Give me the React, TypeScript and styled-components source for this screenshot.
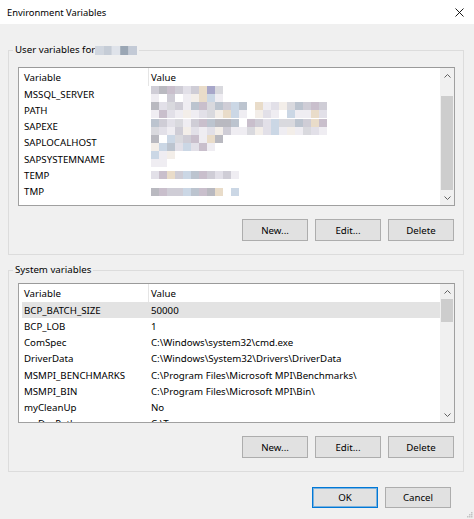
import styled, { createGlobalStyle } from "styled-components";

const GlobalStyle = createGlobalStyle`
  * { box-sizing: border-box; }
  body {
    margin: 0;
    background: #f0f0f0;
  }
`;

const palette: Record<string, string> = {
    a: "#b9b9c0",
    b: "#cfcdd6",
    c: "#e2e0e8",
    d: "#efedf2",
    e: "#a7a6c9",
    f: "#e9dcc9",
    g: "#cbd7e5",
    h: "#c9bfcc",
    i: "#d9d9de",
    j: "#f3eee9",
    k: "#bcc4cf",
};

const userVars = [
    { name: "MSSQL_SERVER", mosaic: ["bahbcbfei", "dwbwdjfgd"] },
    { name: "PATH", mosaic: ["acibdkhikbgkwfdcjikbhb", "dhcdjdcijfgdwjcdwgddfc"] },
    { name: "SAPEXE", mosaic: ["kbcidbhkaakwhbcgiikbfh", "icdbjcdcjbddijcgdjdicd"] },
    { name: "SAPLOCALHOST", mosaic: ["awgibhdfa", "jgkcgchdw"] },
    { name: "SAPSYSTEMNAME", mosaic: ["gdj", "ddw"] },
    { name: "TEMP", mosaic: ["chfbgkhbcbd"] },
    { name: "TMP", mosaic: ["ahbbgkhafwg"] },
];

const systemVars = [
    { name: "BCP_BATCH_SIZE", value: "50000" },
    { name: "BCP_LOB", value: "1" },
    { name: "ComSpec", value: "C:\\Windows\\system32\\cmd.exe" },
    { name: "DriverData", value: "C:\\Windows\\System32\\Drivers\\DriverData" },
    { name: "MSMPI_BENCHMARKS", value: "C:\\Program Files\\Microsoft MPI\\Benchmarks\\" },
    { name: "MSMPI_BIN", value: "C:\\Program Files\\Microsoft MPI\\Bin\\" },
    { name: "myCleanUp", value: "No" },
    { name: "myDevPath", value: "C:\\Temp" },
];

const Dialog = styled.div`
    width: 474px;
    height: 519px;
    position: relative;
    display: flex;
    flex-direction: column;
    background: #f0f0f0;
    font-family: "Noto Sans", "Open Sans", sans-serif;
    font-size: 9.7px;
    color: #000;
    overflow: hidden;
`;

const TitleBar = styled.div`
    height: 24px;
    flex: none;
    display: flex;
    align-items: center;
    justify-content: space-between;
    padding: 0 10px 0 7px;
    background: #fff;
    font-size: 9.4px;
`;

const Body = styled.div`
    flex: 1;
    display: flex;
    flex-direction: column;
    padding: 18px 10px 0 8px;
`;

const Group = styled.fieldset<{ $top: number; $gap?: number }>`
    margin: ${(p) => p.$gap ?? 0}px 0 0;
    min-width: 0;
    border: 1px solid #dcdcdc;
    padding: ${(p) => p.$top}px 8px 13px 9px;
    display: flex;
    flex-direction: column;
`;

const Legend = styled.legend`
    margin-left: -5px;
    padding: 0 2px;
    height: 16px;
    line-height: 16px;
    display: flex;
    align-items: center;
`;

const ListView = styled.div<{ $height: number }>`
    height: ${(p) => p.$height}px;
    flex: none;
    display: flex;
    background: #fff;
    border: 1px solid #a0a0a0;
    border-top-color: #9a9a9a;
`;

const Rows = styled.div`
    flex: 1;
    min-width: 0;
    overflow: hidden;
    padding-left: 3px;
`;

const Row = styled.div<{ $selected?: boolean; $header?: boolean }>`
    height: ${(p) => (p.$header ? 18 : 16.25)}px;
    display: grid;
    grid-template-columns: 127px 1fr;
    align-items: center;
    background: ${(p) => (p.$selected ? "#e3e3e3" : "transparent")};
    white-space: nowrap;
`;

const NameCell = styled.div<{ $header?: boolean }>`
    height: 100%;
    display: flex;
    align-items: center;
    padding-left: 2px;
    border-right: 1px solid ${(p) => (p.$header ? "#e5e5e5" : "transparent")};
`;

const ValueCell = styled.div`
    height: 100%;
    display: flex;
    align-items: center;
    padding-left: 2px;
`;

const ScrollBar = styled.div`
    width: 14px;
    flex: none;
    display: flex;
    flex-direction: column;
    background: #f0f0f0;
`;

const Arrow = styled.div`
    height: 15px;
    flex: none;
    display: flex;
    align-items: center;
    justify-content: center;
    color: #606060;
`;

const Track = styled.div`
    flex: 1;
`;

const Thumb = styled.div<{ $offset: number; $size: number }>`
    margin: ${(p) => p.$offset}px 1px 0;
    height: ${(p) => p.$size}px;
    background: #cdcdcd;
`;

const ButtonRow = styled.div<{ $gap: number; $pad?: number }>`
    margin-top: ${(p) => p.$gap}px;
    display: flex;
    justify-content: flex-end;
    gap: 7px;
    padding-right: ${(p) => p.$pad ?? 1}px;
`;

const Button = styled.button<{ $default?: boolean; $height?: number }>`
    width: 66px;
    height: ${(p) => p.$height ?? 22}px;
    margin: 0;
    padding: 0;
    font: inherit;
    color: #000;
    background: #e1e1e1;
    border: 1px solid ${(p) => (p.$default ? "#0078d7" : "#adadad")};
    box-shadow: ${(p) => (p.$default ? "inset 0 0 0 1px rgba(0, 120, 215, 0.45)" : "none")};
`;

const Grip = styled.svg`
    position: absolute;
    right: 1px;
    bottom: 1px;
`;

const Mosaic = ({ rows, cell = 8, h = 8 }: { rows: string[]; cell?: number; h?: number }) => {
    const cols = Math.max(...rows.map((r) => r.length));
    return (
        <svg width={cols * cell} height={rows.length * h} style={{ display: "block" }}>
            {rows.map((r, y) =>
                r.split("").map((c, x) =>
                    palette[c] ? (
                        <rect key={`${x}-${y}`} x={x * cell} y={y * h} width={cell} height={h} fill={palette[c]} />
                    ) : null,
                ),
            )}
        </svg>
    );
};

const UserBadge = () => {
    const colors = ["#d0d6df", "#c5ccd6", "#dfe3ea", "#9aa6b4", "#c3cad6"];
    return (
        <svg width={42} height={9} style={{ display: "block" }}>
            {colors.map((c, i) => (
                <rect key={i} x={i * 8.4} y={0} width={8.4} height={9} fill={c} />
            ))}
        </svg>
    );
};

const Chevron = ({ up }: { up?: boolean }) => (
    <svg width="7" height="4" viewBox="0 0 7 4">
        <path d={up ? "M0.5 3.5 L3.5 0.5 L6.5 3.5" : "M0.5 0.5 L3.5 3.5 L6.5 0.5"} fill="none" stroke="currentColor" strokeWidth="1" />
    </svg>
);

const Scroller = ({ offset, size }: { offset: number; size: number }) => (
    <ScrollBar>
        <Arrow>
            <Chevron up />
        </Arrow>
        <Track>
            <Thumb $offset={offset} $size={size} />
        </Track>
        <Arrow>
            <Chevron />
        </Arrow>
    </ScrollBar>
);

const Header = () => (
    <Row $header>
        <NameCell $header>Variable</NameCell>
        <ValueCell>Value</ValueCell>
    </Row>
);

const App = () => {
    return (
        <Dialog>
            <GlobalStyle />
            <TitleBar>
                <span>Environment Variables</span>
                <svg width="9" height="9" viewBox="0 0 9 9">
                    <path d="M0.5 0.5 L8.5 8.5 M8.5 0.5 L0.5 8.5" stroke="#000" strokeWidth="0.9" />
                </svg>
            </TitleBar>
            <Body>
                <Group $top={9}>
                    <Legend>
                        User variables for
                        <UserBadge />
                    </Legend>
                    <ListView $height={139}>
                        <Rows>
                            <Header />
                            {userVars.map((v) => (
                                <Row key={v.name}>
                                    <NameCell>{v.name}</NameCell>
                                    <ValueCell>
                                        <Mosaic rows={v.mosaic} />
                                    </ValueCell>
                                </Row>
                            ))}
                        </Rows>
                        <Scroller offset={13} size={94} />
                    </ListView>
                    <ButtonRow $gap={13}>
                        <Button>New...</Button>
                        <Button>Edit...</Button>
                        <Button>Delete</Button>
                    </ButtonRow>
                </Group>
                <Group $top={5} $gap={7}>
                    <Legend>System variables</Legend>
                    <ListView $height={140}>
                        <Rows>
                            <Header />
                            {systemVars.map((v, i) => (
                                <Row key={v.name} $selected={i === 0}>
                                    <NameCell>{v.name}</NameCell>
                                    <ValueCell>{v.value}</ValueCell>
                                </Row>
                            ))}
                        </Rows>
                        <Scroller offset={0} size={23} />
                    </ListView>
                    <ButtonRow $gap={13}>
                        <Button>New...</Button>
                        <Button>Edit...</Button>
                        <Button>Delete</Button>
                    </ButtonRow>
                </Group>
                <ButtonRow $gap={15} $pad={13}>
                    <Button $default $height={21}>
                        OK
                    </Button>
                    <Button $height={21}>Cancel</Button>
                </ButtonRow>
            </Body>
            <Grip width="7" height="7" viewBox="0 0 7 7">
                <rect x="5" y="1" width="1.5" height="1.5" fill="#c4c4c4" />
                <rect x="3" y="3" width="1.5" height="1.5" fill="#c4c4c4" />
                <rect x="5" y="3" width="1.5" height="1.5" fill="#c4c4c4" />
                <rect x="1" y="5" width="1.5" height="1.5" fill="#c4c4c4" />
                <rect x="3" y="5" width="1.5" height="1.5" fill="#c4c4c4" />
                <rect x="5" y="5" width="1.5" height="1.5" fill="#c4c4c4" />
            </Grip>
        </Dialog>
    );
};

export default App;
